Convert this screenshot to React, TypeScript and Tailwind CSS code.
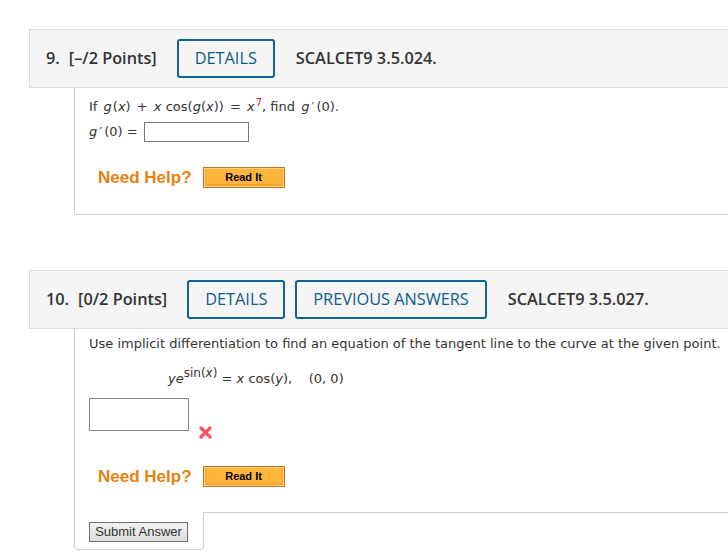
import React from "react";

const verdana = { fontFamily: '"DejaVu Sans", Verdana, sans-serif' };
const open = { fontFamily: '"Open Sans", sans-serif' };
const arial = { fontFamily: '"Liberation Sans", Arial, sans-serif' };

function Header({ num, points, buttons, code }: { num: string; points: string; buttons: string[]; code: string }) {
  return (
    <div
      className="flex h-[59px] items-center border-y border-l border-[#dcdcdc] bg-[#f5f5f5] pl-[16px] text-[16.3px] text-[#333]"
      style={open}
    >
      <span className="font-semibold">{num}</span>
      <span className="ml-[9px] font-semibold">{points}</span>
      <div className="ml-[20px] flex gap-[10px]">
        {buttons.map((b) => (
          <div
            key={b}
            className="flex h-[39px] items-center rounded-[3px] border-2 border-[#0d6399] px-[16px] text-[#0d5a8f]"
          >
            {b}
          </div>
        ))}
      </div>
      <span className="ml-[21px] font-semibold">{code}</span>
    </div>
  );
}

function NeedHelp() {
  return (
    <div className="flex h-[21px] items-center" style={arial}>
      <span className="ml-[9px] text-[17px] font-bold leading-none text-[#e8820c]">Need Help?</span>
      <div className="ml-[11px] flex h-[21px] w-[82px] items-center justify-center border border-[#c0762a] bg-[#ffb43a] shadow-[inset_0_0_0_1px_#ffd27e,inset_0_-1px_0_2px_#f5a42e]">
        <span className="text-[11px] font-bold leading-none text-black">Read It</span>
      </div>
    </div>
  );
}

function RedX() {
  return (
    <svg width="13" height="13" viewBox="0 0 13 13">
      <path d="M2 2 L11 11 M11 2 L2 11" stroke="#f25561" strokeWidth="3.2" strokeLinecap="round" />
    </svg>
  );
}

export default function App() {
  return (
    <div className="min-h-[553px] w-[728px] overflow-hidden bg-white pl-[29px] pt-[29px]">
      <Header num="9." points="[–/2 Points]" buttons={["DETAILS"]} code="SCALCET9 3.5.024." />
      <div className="ml-[45px] border-b border-l border-[#cfcfcf] pl-[14px] pb-[26px] pt-[10px] text-[13px] text-[#333]" style={verdana}>
        <div className="h-[18px] leading-[18px] whitespace-nowrap">
          If <i className="mr-[1px] ml-[2px]">g</i>(<i>x</i>) <span className="mx-[2px]">+</span> <i>x</i> cos(<i>g</i>(<i>x</i>)){" "}
          <span className="mx-[2px]">=</span> <i>x</i>
          <sup className="ml-[1px] text-[10px] text-[#e8141a]">7</sup>, find <i className="ml-[2px]">g</i>
          <span className="mx-[2px]">′</span>(0).
        </div>
        <div className="mt-[6px] flex h-[20px] items-center">
          <span>
            <i>g</i>
            <span className="mx-[2px]">′</span>(0) =
          </span>
          <div className="ml-[6px] h-[20px] w-[105px] border border-[#777] bg-white" />
        </div>
        <div className="mt-[25px]">
          <NeedHelp />
        </div>
      </div>

      <div className="h-[55px]" />

      <Header num="10." points="[0/2 Points]" buttons={["DETAILS", "PREVIOUS ANSWERS"]} code="SCALCET9 3.5.027." />
      <div className="ml-[45px] border-l border-[#cfcfcf] pl-[14px] pt-[6px] pb-[25px] text-[13px] text-[#333]" style={verdana}>
        <div className="h-[18px] leading-[18px] whitespace-nowrap">
          Use implicit differentiation to find an equation of the tangent line to the curve at the given point.
        </div>
        <div className="mt-[17px] h-[18px] pl-[79px] leading-[18px] whitespace-nowrap">
          <i>ye</i>
          <sup className="text-[12px]">
            sin(<i>x</i>)
          </sup>{" "}
          = <i>x</i> cos(<i>y</i>),&nbsp;&nbsp;&nbsp; (0, 0)
        </div>
        <div className="mt-[10px] flex items-start">
          <div className="h-[33px] w-[100px] border border-[#888] bg-white" />
          <div className="ml-[10px] mt-[28px]">
            <RedX />
          </div>
        </div>
        <div className="mt-[27px]">
          <NeedHelp />
        </div>
      </div>
      <div className="ml-[45px] flex">
        <div className="flex h-[38px] w-[130px] items-start rounded-b-[4px] border-x border-b border-[#cfcfcf] pl-[14px] pt-[10px]">
          <div
            className="flex h-[20px] w-[99px] items-center justify-center border border-[#707070] bg-gradient-to-b from-[#f2f2f2] to-[#dcdcdc] text-[13px] text-[#333]"
            style={arial}
          >
            Submit Answer
          </div>
        </div>
        <div className="flex-1 border-t border-[#cfcfcf]" />
      </div>
    </div>
  );
}
